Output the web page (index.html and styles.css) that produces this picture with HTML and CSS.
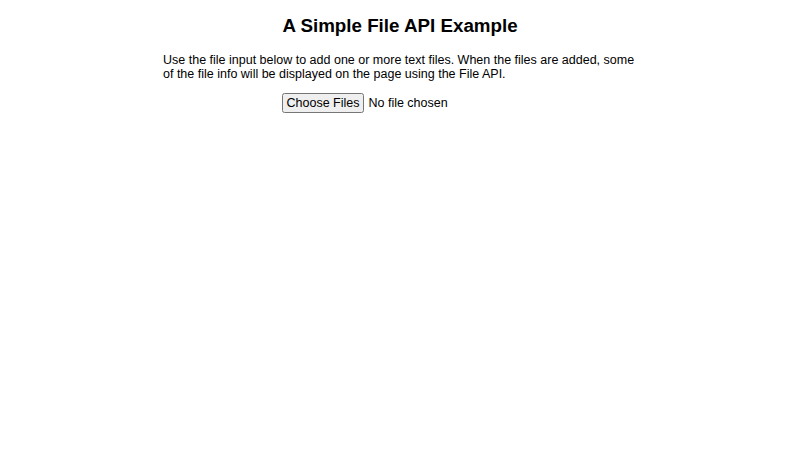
FILE: index.html
```html
<!DOCTYPE html>
<html lang="en">
<head>
<meta charset="utf-8">
<title>A Simple File API Example</title>
<link rel="stylesheet" href="styles.css">
</head>
<body>
<main class="page">
  <h1 class="title">A Simple File API Example</h1>
  <p class="intro">Use the file input below to add one or more text files. When the files are added, some of the file info will be displayed on the page using the File API.</p>
  <div class="picker">
    <input type="file" class="file-input" multiple>
  </div>
  <div class="output"></div>
</main>
</body>
</html>
```
FILE: styles.css
```css
body {
  margin: 0;
  font-family: "Liberation Sans", Arial, sans-serif;
  font-size: 12.5px;
  color: #000;
  background: #fff;
}

.page {
  width: 474px;
  margin: 0 auto;
  padding-top: 15px;
}

.title {
  font-size: 1.5em;
  line-height: 22px;
  text-align: center;
  margin: 0 0 16px;
}

.intro {
  line-height: 14px;
  margin: 0 0 12px;
}

.picker {
  text-align: center;
}

.file-input {
  font-family: inherit;
  font-size: 12.5px;
}

.file-input::file-selector-button {
  padding: 1px 3px;
  margin-right: 4px;
}
```
